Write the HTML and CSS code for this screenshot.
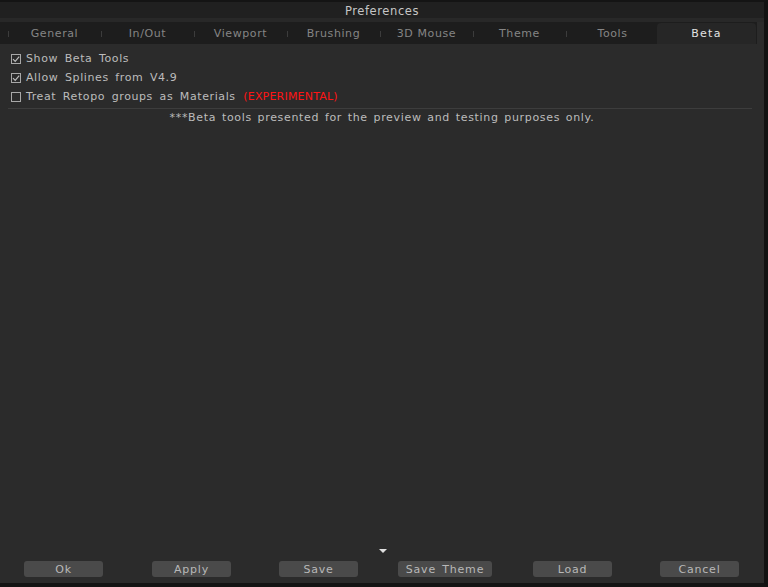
FILE: index.html
```html
<!DOCTYPE html>
<html>
<head>
<meta charset="utf-8">
<link rel="stylesheet" href="styles.css">
</head>
<body>
<div class="window">
  <div class="titlebar">Preferences</div>
  <div class="strip"></div>
  <div class="tabs">
    <div class="tab">General</div>
    <div class="tab">In/Out</div>
    <div class="tab">Viewport</div>
    <div class="tab">Brushing</div>
    <div class="tab">3D Mouse</div>
    <div class="tab">Theme</div>
    <div class="tab">Tools</div>
    <div class="tab active">Beta</div>
  </div>
  <div class="content">
    <div class="options">
      <label class="opt"><span class="box checked"><svg viewBox="0 0 10 10" width="10" height="10"><path d="M2 5.2 L4.2 7.4 L8.2 2.6" fill="none" stroke="#bdbdbd" stroke-width="1.2"/></svg></span>Show Beta Tools</label>
      <label class="opt"><span class="box checked"><svg viewBox="0 0 10 10" width="10" height="10"><path d="M2 5.2 L4.2 7.4 L8.2 2.6" fill="none" stroke="#bdbdbd" stroke-width="1.2"/></svg></span>Allow Splines from V4.9</label>
      <label class="opt"><span class="box"></span>Treat Retopo groups as Materials <span class="exp">(EXPERIMENTAL)</span></label>
    </div>
    <div class="sep"></div>
    <div class="note">***Beta tools presented for the preview and testing purposes only.</div>
    <div class="spacer"></div>
    <div class="arrow"></div>
    <div class="buttons">
      <div class="btn w-ok">Ok</div>
      <div class="btn w-apply">Apply</div>
      <div class="btn w-save">Save</div>
      <div class="btn w-theme">Save Theme</div>
      <div class="btn w-load">Load</div>
      <div class="btn w-cancel">Cancel</div>
    </div>
  </div>
</div>
</body>
</html>
```
FILE: styles.css
```css
html, body {
  margin: 0;
  padding: 0;
  background: #3a3a3a;
  width: 768px;
  height: 587px;
  overflow: hidden;
}
body {
  font-family: "DejaVu Sans", "Liberation Sans", sans-serif;
  font-size: 11px;
}
.window {
  box-sizing: border-box;
  border-top: 2px solid #141414;
  border-right: 4px solid #121212;
  border-bottom: 4px solid #141414;
  width: 768px;
  height: 587px;
  display: flex;
  flex-direction: column;
  background: #2b2b2b;
}
.titlebar {
  height: 16px;
  box-sizing: border-box;
  padding-top: 1px;
  background: #202020;
  color: #c6c6c6;
  text-align: center;
  line-height: 16px;
  font-size: 11.5px;
  letter-spacing: 0.6px;
}
.strip {
  height: 4px;
  background: #282828;
}
.tabs {
  height: 22px;
  background: #1d1d1d;
  display: flex;
  padding-left: 8px;
  margin-right: 7px;
}
.tab {
  width: 93px;
  box-sizing: border-box;
  color: #858585;
  text-align: center;
  line-height: 22px;
  padding-top: 1px;
  letter-spacing: 0.6px;
  position: relative;
}
.tab::before {
  content: "";
  position: absolute;
  left: 0;
  top: 9px;
  width: 1px;
  height: 6px;
  background: #3c3c3c;
}
.tab.active {
  width: 99px;
  margin-left: -2px;
  margin-top: 1px;
  padding-top: 1px;
  background: #262626;
  border-radius: 4px 4px 0 0;
  color: #e2e2e2;
  line-height: 20px;
  letter-spacing: 1.3px;
}
.tab.active::before { display: none; }
.content {
  flex: 1;
  display: flex;
  flex-direction: column;
  padding: 5px 0 0 0;
}
.options {
  display: flex;
  flex-direction: column;
  padding-left: 11px;
}
.opt {
  display: flex;
  align-items: center;
  height: 19px;
  color: #bcbcbc;
  letter-spacing: 0.6px;
  word-spacing: 2.5px;
  white-space: pre;
}
.box {
  width: 10px;
  height: 10px;
  border: 1px solid #a8a8a8;
  box-sizing: border-box;
  margin-right: 5px;
  display: flex;
  align-items: center;
  justify-content: center;
}
.box svg { display: block; flex: none; }
.exp {
  color: #ff1414;
  letter-spacing: 0.2px;
  margin-left: 1px;
  word-spacing: 0;
}
.sep {
  height: 1px;
  background: #3d3d3d;
  margin: 2px 12px 0 8px;
}
.note {
  color: #bcbcbc;
  text-align: center;
  letter-spacing: 0.68px;
  word-spacing: 1.5px;
  height: 18px;
  line-height: 18px;
  margin-left: 0;
}
.spacer { flex: 1; }
.arrow {
  align-self: center;
  margin-left: 2px;
  width: 0;
  height: 0;
  border-left: 4px solid transparent;
  border-right: 4px solid transparent;
  border-top: 4px solid #e0e0e0;
  margin-bottom: 8px;
}
.buttons {
  display: flex;
  padding-left: 24px;
  height: 16px;
  margin-bottom: 6px;
}
.btn {
  height: 16px;
  line-height: 16px;
  padding-top: 1px;
  background: #4a4a4a;
  border-radius: 3px;
  color: #b8b8b8;
  text-align: center;
  letter-spacing: 0.8px;
  word-spacing: 2px;
  box-sizing: border-box;
}
.w-ok { width: 79px; }
.w-apply { width: 79px; margin-left: 49px; }
.w-save { width: 79px; margin-left: 48px; }
.w-theme { width: 94px; margin-left: 40px; }
.w-load { width: 79px; margin-left: 41px; }
.w-cancel { width: 79px; margin-left: 48px; }
```
